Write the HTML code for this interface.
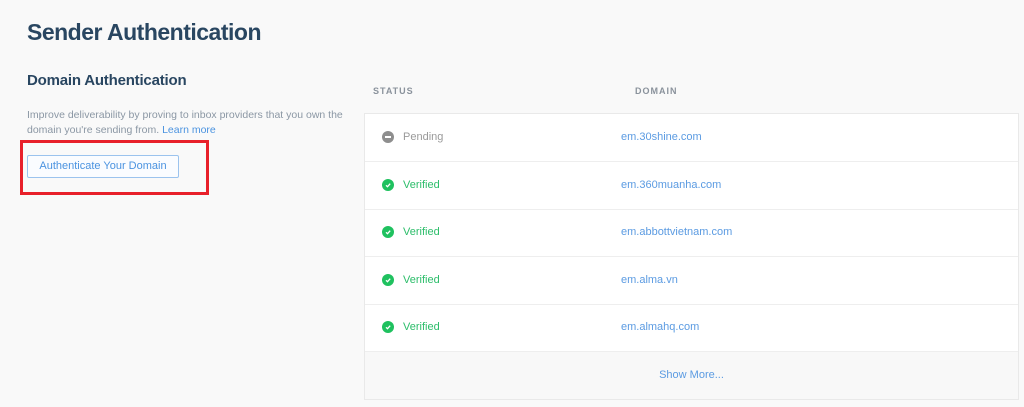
<!DOCTYPE html>
<html><head><style>
body{margin:0;width:1024px;height:407px;background:#f9f9f9;font-family:"Liberation Sans",sans-serif;position:relative;overflow:hidden}
.a{position:absolute;white-space:nowrap}
h1{position:absolute;left:27px;top:19px;margin:0;font-size:23px;font-weight:bold;color:#294661;letter-spacing:-0.5px}
h2{position:absolute;left:27px;top:72px;margin:0;font-size:15px;font-weight:bold;color:#294661;letter-spacing:-0.2px}
.desc{left:27px;top:108px;font-size:10.5px;line-height:15px;color:#8b97a4}
.btn{left:27px;top:155px;width:150px;height:21px;border:1px solid #9bc3ee;border-radius:2px;color:#4b93e0;font-size:11px;line-height:21px;text-align:center;background:#fafcff}
.red{left:20px;top:140px;width:183px;height:49px;border:3px solid #e8202a}
.hd{font-size:9px;font-weight:bold;color:#8a929c;letter-spacing:1px;top:86px}
.tbl{left:364px;top:113px;width:653px;height:285px;border:1px solid #e9e9e9;background:#fff}
.row{position:absolute;left:0;width:653px;height:47px;border-bottom:1px solid #eee}
.st{position:absolute;left:17px;top:17px;font-size:11px;display:flex;align-items:center}
.ic{width:12px;height:12px;border-radius:50%;margin-right:9px;display:inline-block;position:relative}
.dm{position:absolute;left:256px;top:17px;font-size:11px;color:#5b9be2}
.more{position:absolute;left:0;top:238px;width:653px;height:47px;background:#f8f8f8;text-align:center;line-height:47px;font-size:11px;color:#5b9be2}
</style></head><body>
<h1>Sender Authentication</h1>
<h2>Domain Authentication</h2>
<div class="a desc">Improve deliverability by proving to inbox providers that you own the<br>domain you're sending from. <span style="color:#4b93e0">Learn more</span></div>
<div class="a btn">Authenticate Your Domain</div>
<div class="a red"></div>
<div class="a hd" style="left:373px">STATUS</div>
<div class="a hd" style="left:635px">DOMAIN</div>
<div class="a tbl">
<div class="row" style="top:0"><div class="st" style="color:#9a9a9a"><span class="ic" style="background:#8e8e8e"><span style="position:absolute;left:3px;top:5px;width:6px;height:2px;background:#fff"></span></span>Pending</div><div class="dm">em.30shine.com</div></div>
<div class="row" style="top:48px"><div class="st" style="color:#2cbd6a"><span class="ic" style="background:#1fc15f"><svg width="12" height="12" style="position:absolute;left:0;top:0"><path d="M4 6.3l1.5 1.4 2.7-3" stroke="#fff" stroke-width="1.3" fill="none"/></svg></span>Verified</div><div class="dm">em.360muanha.com</div></div>
<div class="row" style="top:95px"><div class="st" style="color:#2cbd6a"><span class="ic" style="background:#1fc15f"><svg width="12" height="12" style="position:absolute;left:0;top:0"><path d="M4 6.3l1.5 1.4 2.7-3" stroke="#fff" stroke-width="1.3" fill="none"/></svg></span>Verified</div><div class="dm">em.abbottvietnam.com</div></div>
<div class="row" style="top:143px"><div class="st" style="color:#2cbd6a"><span class="ic" style="background:#1fc15f"><svg width="12" height="12" style="position:absolute;left:0;top:0"><path d="M4 6.3l1.5 1.4 2.7-3" stroke="#fff" stroke-width="1.3" fill="none"/></svg></span>Verified</div><div class="dm">em.alma.vn</div></div>
<div class="row" style="top:190px"><div class="st" style="color:#2cbd6a"><span class="ic" style="background:#1fc15f"><svg width="12" height="12" style="position:absolute;left:0;top:0"><path d="M4 6.3l1.5 1.4 2.7-3" stroke="#fff" stroke-width="1.3" fill="none"/></svg></span>Verified</div><div class="dm">em.almahq.com</div></div>
<div class="more">Show More...</div>
</div>
</body></html>
